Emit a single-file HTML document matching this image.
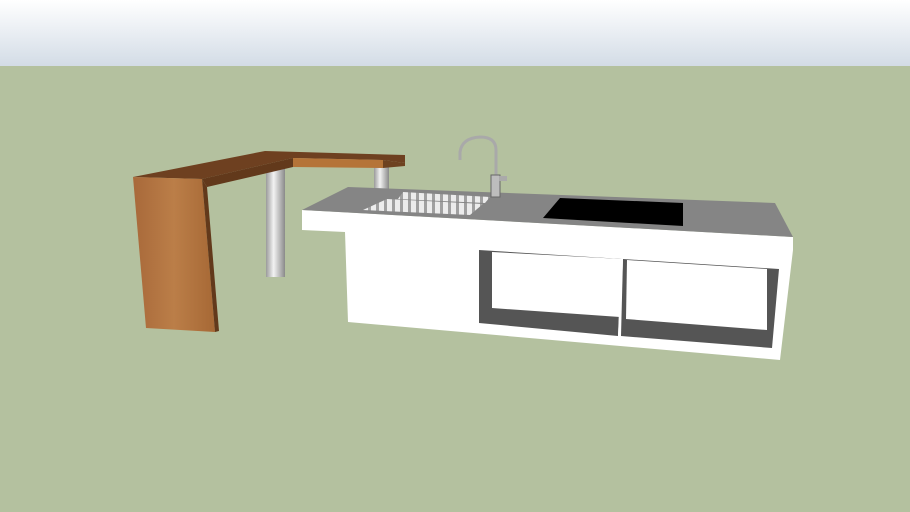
<!DOCTYPE html>
<html><head><style>html,body{margin:0;padding:0;width:910px;height:512px;overflow:hidden}</style></head>
<body>
<svg width="910" height="512" viewBox="0 0 910 512" xmlns="http://www.w3.org/2000/svg">
<defs>
<linearGradient id="sky" x1="0" y1="0" x2="0" y2="1"><stop offset="0" stop-color="#ffffff"/><stop offset="1" stop-color="#d3dce6"/></linearGradient>
<linearGradient id="wood" x1="0" y1="0" x2="1" y2="0"><stop offset="0" stop-color="#a8693a"/><stop offset="0.5" stop-color="#bb7e48"/><stop offset="1" stop-color="#a66835"/></linearGradient>
<linearGradient id="leg" x1="0" y1="0" x2="1" y2="0"><stop offset="0" stop-color="#9a9a9a"/><stop offset="0.4" stop-color="#f2f2f2"/><stop offset="1" stop-color="#8a8a8a"/></linearGradient>
<pattern id="stripe" width="8" height="10" patternUnits="userSpaceOnUse"><rect width="8" height="10" fill="#ececec"/><rect width="3" height="10" fill="#a0a0a0"/></pattern>
</defs>
<rect width="910" height="66" fill="url(#sky)"/>
<rect y="66" width="910" height="446" fill="#b4c19f"/>
<rect x="266" y="168" width="19" height="109" fill="url(#leg)"/>
<rect x="374" y="166" width="15" height="26" fill="url(#leg)"/>
<polygon points="133,177 265,151 405,155 405,163 383,160 293,158 202,179" fill="#6e4020"/>
<polygon points="293,158 383,160 383,168 293,167" fill="#b57438"/>
<polygon points="383,160 405,163 405,166 383,168" fill="#6e4220"/>
<polygon points="202,179 293,158 293,167 207,187" fill="#62391b"/>
<polygon points="133,177 202,179 215,332 146,328" fill="url(#wood)"/>
<polygon points="202,179 207,187 219,331 215,332" fill="#62391b"/>
<polygon points="302,210 793,237 793,250 780,360 348,322 345,232 302,230" fill="#ffffff"/>
<polygon points="302,210 348,187 775,203 793,237" fill="#858585"/>
<polygon points="479,250 622,259 618,336 479,323" fill="#555"/>
<polygon points="492,252 622,259 620,317 492,308" fill="#ffffff"/>
<polygon points="623,259 779,269 772,348 621,336" fill="#555"/>
<polygon points="627,260 767,269 767,330 626,319" fill="#ffffff"/>
<line x1="622" y1="259" x2="619" y2="336" stroke="#fff" stroke-width="2"/>
<polygon points="543,218 560,198 683,203 683,226" fill="#000"/>
<polygon points="403,192 490,197 485,203 398,199" fill="url(#stripe)"/>
<polygon points="363,210 387,199 483,204 470,215" fill="url(#stripe)"/>
<path d="M496 195 L496 150 Q496 137 480 137 Q462 138 460 152 L460 160" fill="none" stroke="#a9a9a9" stroke-width="3"/>
<rect x="491" y="175" width="9" height="22" fill="#bdbdbd" stroke="#666" stroke-width="1"/>
<rect x="499" y="176" width="8" height="5" fill="#aaa"/>
</svg>
</body></html>
